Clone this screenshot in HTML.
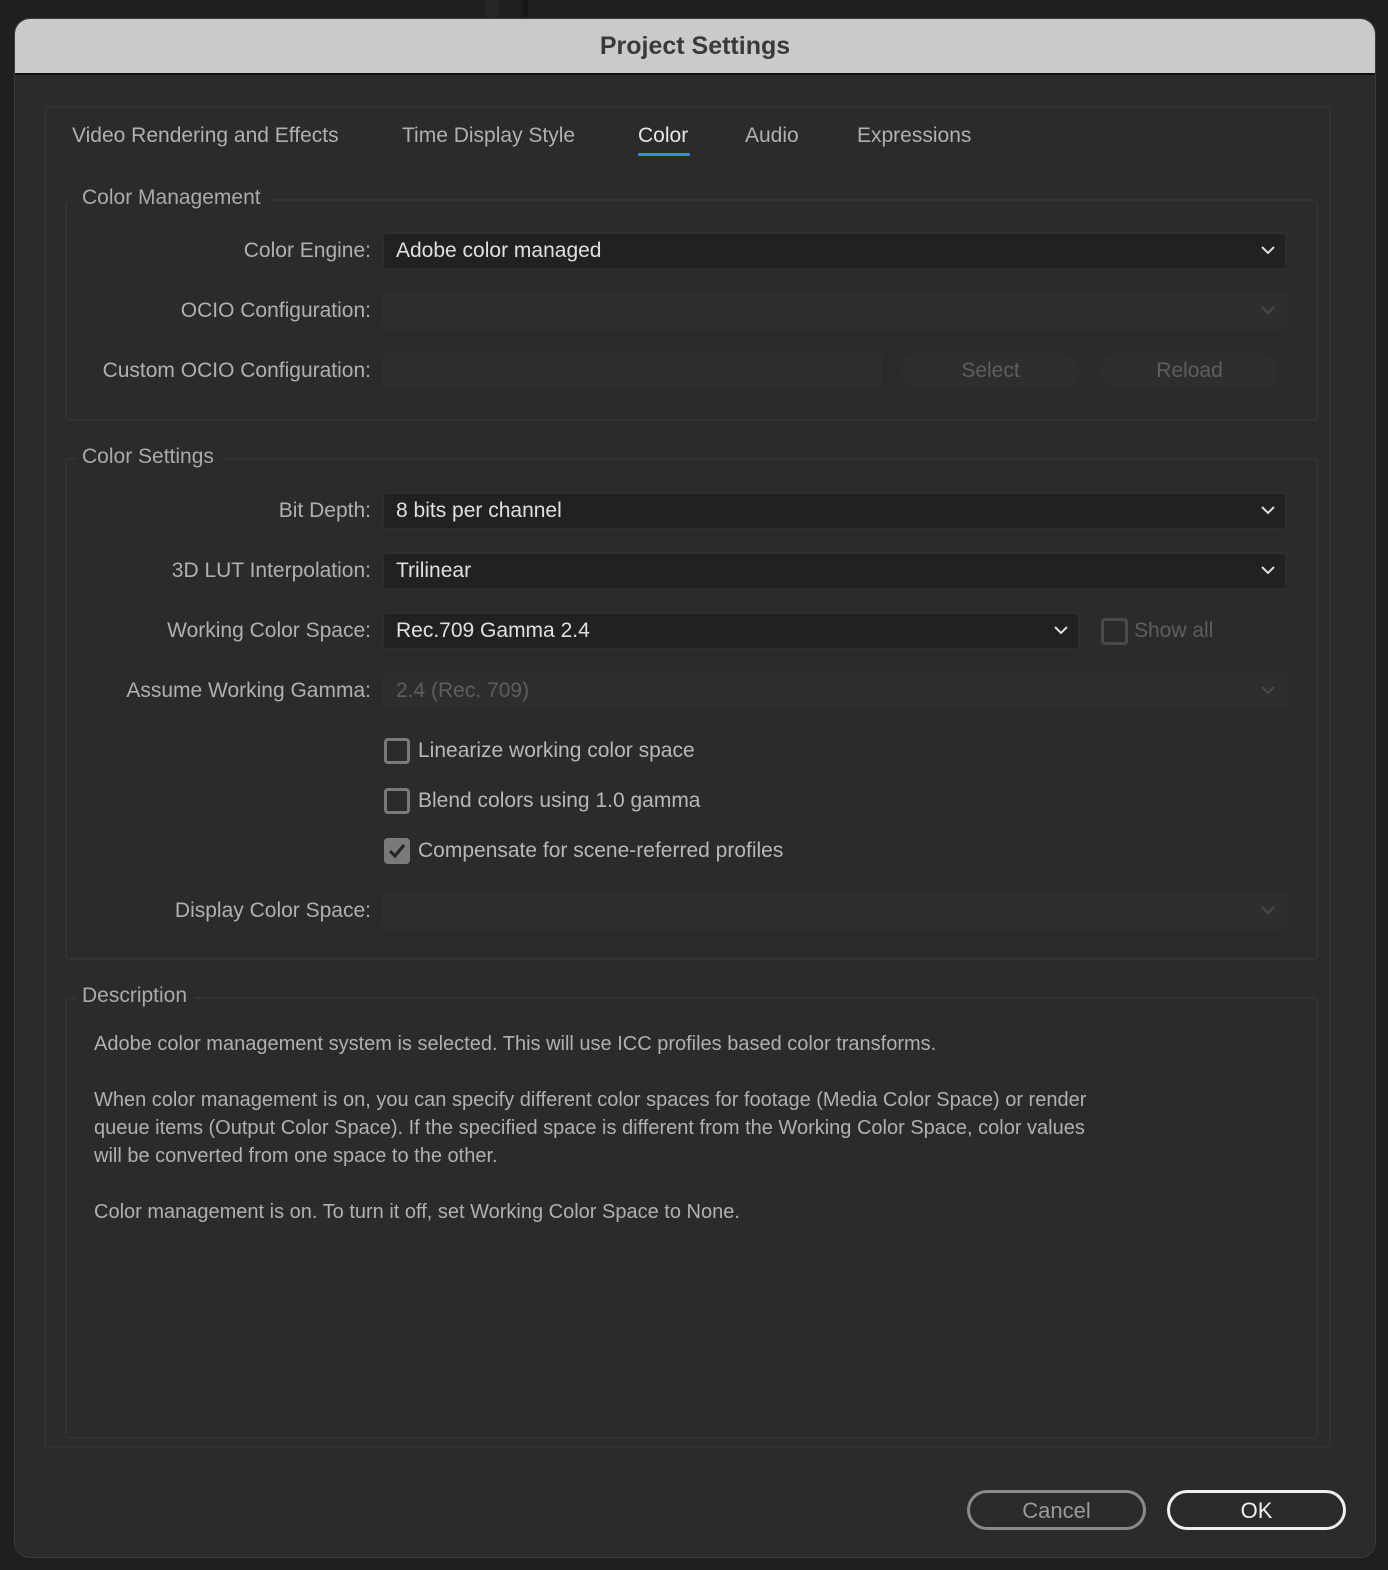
<!DOCTYPE html>
<html><head><meta charset="utf-8"><style>
*{margin:0;padding:0;box-sizing:border-box}
body{width:1388px;height:1570px;background:#1f1f1f;position:relative;overflow:hidden;font-family:"Liberation Sans",sans-serif;color:#b4b4b4}
.a{position:absolute}
.w{position:absolute;left:0;top:2px;width:1388px;height:1568px}
.dlg{left:14px;top:18px;width:1362px;height:1540px;background:#2b2b2b;border-radius:16px;overflow:hidden;border:1px solid #3a3a3a}
.title{left:0;top:0;width:100%;height:56px;background:#c9cbc9;border-bottom:2px solid #111;text-align:center;font-weight:bold;font-size:25px;line-height:54px;color:#3a3a3a}
.panel{left:44px;top:104px;width:1287px;height:1342px;border:2px solid #323232;border-radius:3px}
.tab{top:118px;font-size:21px;line-height:32px;color:#b0b0b0}
.grp{left:65px;width:1253px;border:2px solid #333;border-radius:4px}
.gt{left:76px;font-size:21px;line-height:30px;background:#2b2b2b;padding:0 8px 0 6px;color:#aaa}
.lbl{right:1017px;font-size:21px;line-height:30px;text-align:right;white-space:nowrap;color:#b0b0b0}
.fld{left:382px;width:905px;height:38px;background:#212121;border:2px solid #2e2e2e;border-radius:4px;font-size:21px;line-height:34px;padding-left:12px;color:#e0e0e0}
.dis{background:#2e2e2e;border-color:#2e2e2e;color:#5e5e5e}
.chev{position:absolute;right:8px;top:10px;width:18px;height:12px}
.cb{left:384px;width:26px;height:26px;border:3px solid #7a7a7a;border-radius:4px}
.ct{left:418px;font-size:21px;line-height:30px;color:#b8b8b8}
.desc{left:94px;font-size:20px;line-height:28px;color:#b0b0b0;white-space:nowrap}
.btn{top:1488px;width:179px;height:40px;border-radius:20px;text-align:center;font-size:22px;line-height:36px}
</style></head><body>
<div class="a" style="left:486px;top:0;width:12px;height:18px;background:#262626"></div>
<div class="a" style="left:522px;top:0;width:6px;height:18px;background:#181818"></div>
<div class="a dlg">
<div class="a title">Project Settings</div>
</div>
<div class="w">
<div class="a panel"></div>
<div class="a tab" style="left:72px">Video Rendering and Effects</div>
<div class="a tab" style="left:402px">Time Display Style</div>
<div class="a tab" style="left:638px;color:#e6e6e6">Color</div>
<div class="a" style="left:638px;top:151px;width:52px;height:3px;background:#3f86e0"></div>
<div class="a tab" style="left:745px">Audio</div>
<div class="a tab" style="left:857px">Expressions</div>

<div class="a grp" style="top:197px;height:222px"></div>
<div class="a gt" style="top:181px">Color Management</div>
<div class="a grp" style="top:456px;height:502px"></div>
<div class="a gt" style="top:440px">Color Settings</div>
<div class="a grp" style="top:995px;height:442px"></div>
<div class="a gt" style="top:979px">Description</div>

<div class="a lbl" style="top:234px">Color Engine:</div>
<div class="a fld" style="top:230px">Adobe color managed<svg class="chev" viewBox="0 0 18 12"><path d="M3 3l6 6 6-6" stroke="#ddd" stroke-width="2" fill="none"/></svg></div>
<div class="a lbl" style="top:294px">OCIO Configuration:</div>
<div class="a fld dis" style="top:290px"><svg class="chev" viewBox="0 0 18 12"><path d="M3 3l6 6 6-6" stroke="#4a4a4a" stroke-width="2" fill="none"/></svg></div>
<div class="a lbl" style="top:354px">Custom OCIO Configuration:</div>
<div class="a fld dis" style="top:350px;width:500px"></div>
<div class="a" style="left:902px;top:350px;width:177px;height:38px;border-radius:19px;background:#2e2e2e;text-align:center;font-size:21px;line-height:38px;color:#5e5e5e">Select</div>
<div class="a" style="left:1101px;top:350px;width:177px;height:38px;border-radius:19px;background:#2e2e2e;text-align:center;font-size:21px;line-height:38px;color:#5e5e5e">Reload</div>

<div class="a lbl" style="top:494px">Bit Depth:</div>
<div class="a fld" style="top:490px">8 bits per channel<svg class="chev" viewBox="0 0 18 12"><path d="M3 3l6 6 6-6" stroke="#ddd" stroke-width="2" fill="none"/></svg></div>
<div class="a lbl" style="top:554px">3D LUT Interpolation:</div>
<div class="a fld" style="top:550px">Trilinear<svg class="chev" viewBox="0 0 18 12"><path d="M3 3l6 6 6-6" stroke="#ddd" stroke-width="2" fill="none"/></svg></div>
<div class="a lbl" style="top:614px">Working Color Space:</div>
<div class="a fld" style="top:610px;width:698px">Rec.709 Gamma 2.4<svg class="chev" viewBox="0 0 18 12"><path d="M3 3l6 6 6-6" stroke="#ddd" stroke-width="2" fill="none"/></svg></div>
<div class="a" style="left:1101px;top:616px;width:27px;height:27px;border:3px solid #4a4a4a;border-radius:4px"></div>
<div class="a" style="left:1134px;top:614px;font-size:21px;line-height:30px;color:#5e5e5e">Show all</div>
<div class="a lbl" style="top:674px">Assume Working Gamma:</div>
<div class="a fld dis" style="top:670px">2.4 (Rec. 709)<svg class="chev" viewBox="0 0 18 12"><path d="M3 3l6 6 6-6" stroke="#4a4a4a" stroke-width="2" fill="none"/></svg></div>

<div class="a cb" style="top:736px"></div>
<div class="a ct" style="top:734px">Linearize working color space</div>
<div class="a cb" style="top:786px"></div>
<div class="a ct" style="top:784px">Blend colors using 1.0 gamma</div>
<div class="a cb" style="top:836px;background:#7a7a7a"><svg width="20" height="20" viewBox="0 0 20 20" style="position:absolute;left:0;top:0"><path d="M3 10l5 5 9-11" stroke="#222" stroke-width="3" fill="none"/></svg></div>
<div class="a ct" style="top:834px">Compensate for scene-referred profiles</div>

<div class="a lbl" style="top:894px">Display Color Space:</div>
<div class="a fld dis" style="top:890px"><svg class="chev" viewBox="0 0 18 12"><path d="M3 3l6 6 6-6" stroke="#4a4a4a" stroke-width="2" fill="none"/></svg></div>

<div class="a desc" style="top:1028px">Adobe color management system is selected. This will use ICC profiles based color transforms.</div>
<div class="a desc" style="top:1084px">When color management is on, you can specify different color spaces for footage (Media Color Space) or render<br>queue items (Output Color Space). If the specified space is different from the Working Color Space, color values<br>will be converted from one space to the other.</div>
<div class="a desc" style="top:1196px">Color management is on. To turn it off, set Working Color Space to None.</div>

<div class="a btn" style="left:967px;border:3px solid #8a8a8a;color:#9a9a9a">Cancel</div>
<div class="a btn" style="left:1167px;border:3px solid #f0f0f0;color:#f0f0f0">OK</div>
</div>
</body></html>
